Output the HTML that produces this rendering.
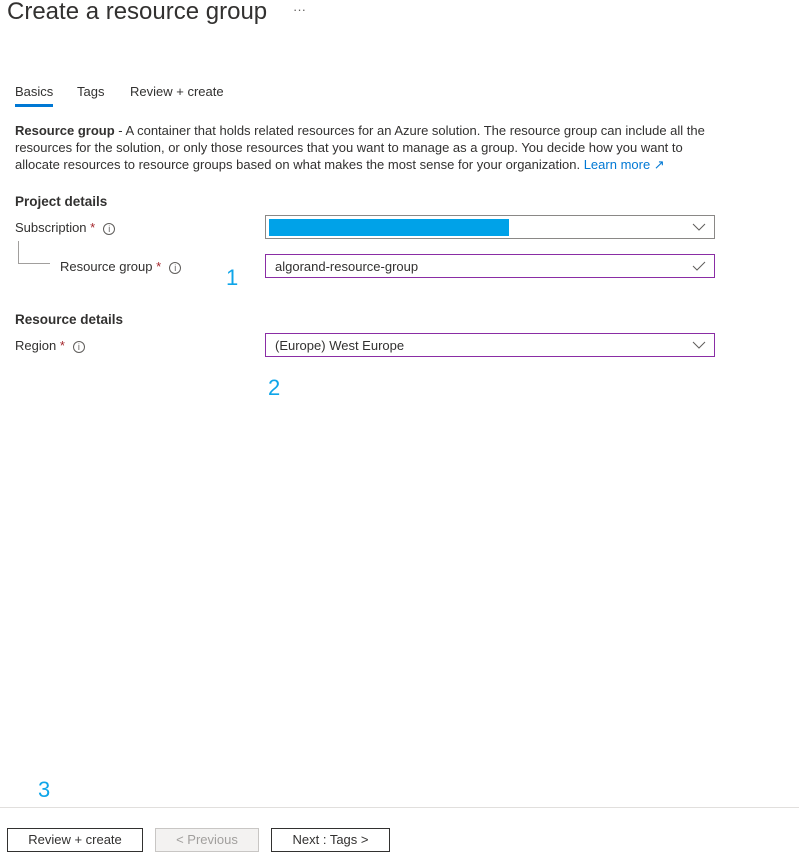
<!DOCTYPE html>
<html><head><style>
*{margin:0;padding:0;box-sizing:border-box}
body{width:799px;height:861px;background:#fff;font-family:"Liberation Sans",sans-serif;font-size:13px;color:#323130;position:relative;overflow:hidden}
.a{position:absolute;white-space:nowrap}
.box{position:absolute;left:265px;width:450px;height:24px;border:1px solid #8a2da5}
.chev{position:absolute;right:8px;top:5px}
.req{color:#a4262c}
.info{display:inline-block;width:12px;height:12px;border:1px solid #605e5c;border-radius:50%;font-size:9px;line-height:10px;text-align:center;color:#605e5c;vertical-align:middle;margin-left:8px}
.btn{position:absolute;top:828px;height:24px;border:1px solid #323130;text-align:center;line-height:22px;font-size:13px}
.num{position:absolute;color:#0ea5e9;font-size:22px}
</style></head><body>
<div class="a" style="left:7px;top:-2px;font-size:24px;color:#323130">Create a resource group</div>
<div class="a" style="left:293px;top:2px;font-size:13px;color:#605e5c">···</div>
<div class="a" style="left:15px;top:84px;">Basics</div>
<div class="a" style="left:15px;top:104px;width:38px;height:3px;background:#0078d4"></div>
<div class="a" style="left:77px;top:84px;">Tags</div>
<div class="a" style="left:130px;top:84px;">Review + create</div>
<div class="a" style="left:15px;top:122px;line-height:17px;white-space:normal;width:690px"><b style="font-weight:600">Resource group</b> - A container that holds related resources for an Azure solution. The resource group can include all the resources for the solution, or only those resources that you want to manage as a group. You decide how you want to allocate resources to resource groups based on what makes the most sense for your organization. <span style="color:#0078d4">Learn more ↗</span></div>
<div class="a" style="left:15px;top:194px;font-weight:bold;font-size:13.5px">Project details</div>
<div class="a" style="left:15px;top:220px;">Subscription <span class="req">*</span><span class="info">i</span></div>
<div class="a" style="left:18px;top:241px;width:1px;height:23px;background:#a19f9d"></div>
<div class="a" style="left:18px;top:263px;width:32px;height:1px;background:#a19f9d"></div>
<div class="a" style="left:60px;top:259px;">Resource group <span class="req">*</span><span class="info">i</span></div>
<div class="box" style="top:215px;border-color:#8a8886"><div style="position:absolute;left:3px;top:3px;width:240px;height:17px;background:#00a2e8"></div><svg class="chev" width="14" height="12"><path d="M1 3l6 6 6-6" fill="none" stroke="#605e5c"/></svg></div>
<div class="box" style="top:254px"><span style="position:absolute;left:9px;top:4px">algorand-resource-group</span><svg class="chev" width="14" height="12"><path d="M1 6l4 4 8-8" fill="none" stroke="#605e5c"/></svg></div>
<div class="num" style="left:226px;top:265px">1</div>
<div class="a" style="left:15px;top:312px;font-weight:bold;font-size:13.5px">Resource details</div>
<div class="a" style="left:15px;top:338px;">Region <span class="req">*</span><span class="info">i</span></div>
<div class="box" style="top:333px"><span style="position:absolute;left:9px;top:4px">(Europe) West Europe</span><svg class="chev" width="14" height="12"><path d="M1 3l6 6 6-6" fill="none" stroke="#605e5c"/></svg></div>
<div class="num" style="left:268px;top:375px">2</div>
<div class="num" style="left:38px;top:777px">3</div>
<div class="a" style="left:0;top:807px;width:799px;height:1px;background:#e1dfdd"></div>
<div class="btn" style="left:7px;width:136px">Review + create</div>
<div class="btn" style="left:155px;width:104px;background:#f3f2f1;border-color:#c8c6c4;color:#a19f9d">&lt; Previous</div>
<div class="btn" style="left:271px;width:119px">Next : Tags &gt;</div>
</body></html>
